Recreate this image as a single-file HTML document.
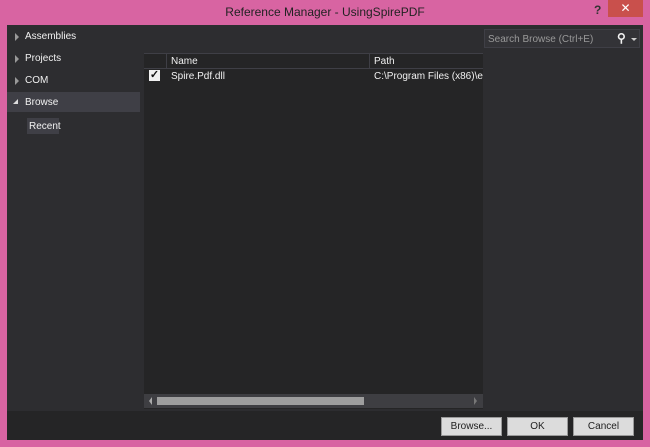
<!DOCTYPE html><html><head><style>
body{margin:0;width:650px;height:447px;background:#d864a2;font-family:"Liberation Sans",sans-serif;font-size:10px;color:#f1f1f1;position:relative;overflow:hidden}
div{position:absolute;box-sizing:border-box}
.t{white-space:nowrap}
.btn{background:#dcdcdc;border:1px solid #9a9a9a;color:#1e1e1e;text-align:center;line-height:17px;top:417px;height:19px;width:61px}
.tri{width:0;height:0;border-top:4px solid transparent;border-bottom:4px solid transparent;border-left:4px solid #999}
</style></head><body>
<div class="t" style="left:0;width:650px;top:5px;text-align:center;font-size:12px;color:#222">Reference Manager - UsingSpirePDF</div>
<div class="t" style="left:594px;top:3px;font-weight:bold;color:#333;font-size:12px">?</div>
<div style="left:608px;top:0;width:35px;height:17px;background:#c9504c;color:#fff;text-align:center;font-size:12px;line-height:16px">✕</div>
<div style="left:7px;top:25px;width:636px;height:415px;background:#2d2d30"></div>
<div style="left:7px;top:411px;width:636px;height:29px;background:#252526"></div>
<div class="tri" style="left:15px;top:33px"></div><div class="t" style="left:25px;top:31px">Assemblies</div>
<div class="tri" style="left:15px;top:55px"></div><div class="t" style="left:25px;top:53px">Projects</div>
<div class="tri" style="left:15px;top:77px"></div><div class="t" style="left:25px;top:75px">COM</div>
<div style="left:7px;top:92px;width:133px;height:20px;background:#3f3f46"></div>
<div style="left:13px;top:99px;width:0;height:0;border-left:5px solid transparent;border-bottom:5px solid #ddd"></div>
<div class="t" style="left:25px;top:97px">Browse</div>
<div style="left:27px;top:118px;width:32px;height:16px;background:#3f3f46"></div>
<div class="t" style="left:29px;top:121px">Recent</div>
<div style="left:144px;top:53px;width:339px;height:356px;background:#252526"></div>
<div style="left:144px;top:53px;width:339px;height:16px;border-bottom:1px solid #3f3f46;border-top:1px solid #3f3f46"></div>
<div style="left:166px;top:53px;width:1px;height:16px;background:#3f3f46"></div>
<div style="left:369px;top:53px;width:1px;height:16px;background:#3f3f46"></div>
<div class="t" style="left:171px;top:56px">Name</div>
<div class="t" style="left:374px;top:56px">Path</div>
<div style="left:149px;top:70px;width:11px;height:11px;background:#f1f1f1;color:#111;font-size:11px;line-height:11px;text-align:center;font-weight:bold">✓</div>
<div class="t" style="left:171px;top:71px">Spire.Pdf.dll</div>
<div class="t" style="left:374px;top:71px;width:109px;overflow:hidden">C:\Program Files (x86)\e-iceblue</div>
<div style="left:144px;top:394px;width:339px;height:14px;background:#3e3e42"></div>
<div style="left:149px;top:397px;width:0;height:0;border-top:4px solid transparent;border-bottom:4px solid transparent;border-right:3px solid #aaa"></div>
<div style="left:157px;top:397px;width:207px;height:8px;background:#9e9e9e"></div>
<div style="left:474px;top:397px;width:0;height:0;border-top:4px solid transparent;border-bottom:4px solid transparent;border-left:3px solid #777"></div>
<div style="left:484px;top:29px;width:156px;height:19px;background:#333337;border:1px solid #3f3f46"></div>
<div class="t" style="left:488px;top:34px;color:#999">Search Browse (Ctrl+E)</div>
<div class="t" style="left:617px;top:31px;font-weight:bold;font-size:12px;transform:scaleX(-1)">&#x26B2;</div>
<div style="left:631px;top:38px;width:0;height:0;border-left:3px solid transparent;border-right:3px solid transparent;border-top:3px solid #ccc"></div>
<div class="btn" style="left:441px">Browse...</div>
<div class="btn" style="left:507px">OK</div>
<div class="btn" style="left:573px">Cancel</div>
</body></html>
